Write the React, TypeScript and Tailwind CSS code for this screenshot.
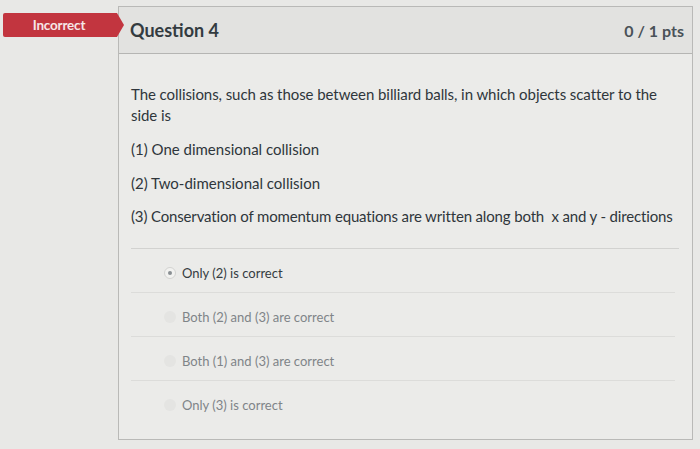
import React from "react";

const ANSWERS = [
  { label: "Only (2) is correct", selected: true },
  { label: "Both (2) and (3) are correct", selected: false },
  { label: "Both (1) and (3) are correct", selected: false },
  { label: "Only (3) is correct", selected: false },
];

export default function App() {
  return (
    <div
      className="relative h-[449px] w-[700px] overflow-hidden bg-[#e8e8e6] pl-[118px] pt-[6px] text-[#2d3b45]"
      style={{ fontFamily: "Lato, 'Noto Sans', sans-serif" }}
    >
      {/* incorrect badge */}
      <div className="absolute left-[3px] top-[13px] flex h-[24px] items-center">
        <div className="flex h-full w-[113px] items-center justify-center rounded-l-[2px] bg-[#c2353f] pr-[1px] pt-[1px]">
          <span className="text-[13.5px] font-bold tracking-[-0.2px] text-[#f6e6e7]">Incorrect</span>
        </div>
        <svg width="8" height="24" viewBox="0 0 8 24" className="block">
          <polygon points="0,0 1,0 8,12 1,24 0,24" fill="#c2353f" />
        </svg>
      </div>

      <div className="h-[434px] w-[575px] border border-[#b9b9b7] bg-[#ebebe9]">
        <div className="flex h-[47px] items-center justify-between border-b border-[#b5b5b3] bg-[#e2e2e0] pl-[11px] pr-[8px]">
          <span className="text-[18px] font-bold text-[#333b40]">Question 4</span>
          <span className="pt-[1px] text-[16px] font-bold text-[#4a5258]">0 / 1 pts</span>
        </div>

        <div className="pl-[12px] pr-[14px] pt-[30px] text-[15px] leading-[21px] text-[#2f363b]">
          <p className="tracking-[-0.07px]">
            The collisions, such as those between billiard balls, in which objects scatter to the
            <br />
            side is
          </p>
          <p className="mt-[13px]">(1) One dimensional collision</p>
          <p className="mt-[13px]">(2) Two-dimensional collision</p>
          <p className="mt-[12px] whitespace-nowrap tracking-[-0.15px]">
            (3) Conservation of momentum equations are written along both&nbsp; x and y - directions
          </p>
          <div className="mt-[21px] h-[1px] w-[548px] bg-[#d2d2d0]" />

          <div>
            {ANSWERS.map((a, i) => (
              <div key={a.label}>
                <div className="flex h-[43px] items-center pl-[33px] pt-[5px]">
                  <span
                    className={`mr-[6px] flex h-[12px] w-[12px] items-center justify-center rounded-full ${a.selected ? "border border-[#d3d3d1] bg-[#f2f2f0]" : "bg-[#e4e4e2]"}`}
                  >
                    {a.selected && <span className="h-[4px] w-[4px] rounded-full bg-[#8a8f93]" />}
                  </span>
                  <span
                    className={`text-[13px] ${a.selected ? "text-[#353c41]" : "text-[#7f8488]"}`}
                  >
                    {a.label}
                  </span>
                </div>
                {i < ANSWERS.length - 1 && <div className="h-[1px] w-[544px] bg-[#dcdcda]" />}
              </div>
            ))}
          </div>
        </div>
      </div>
    </div>
  );
}
